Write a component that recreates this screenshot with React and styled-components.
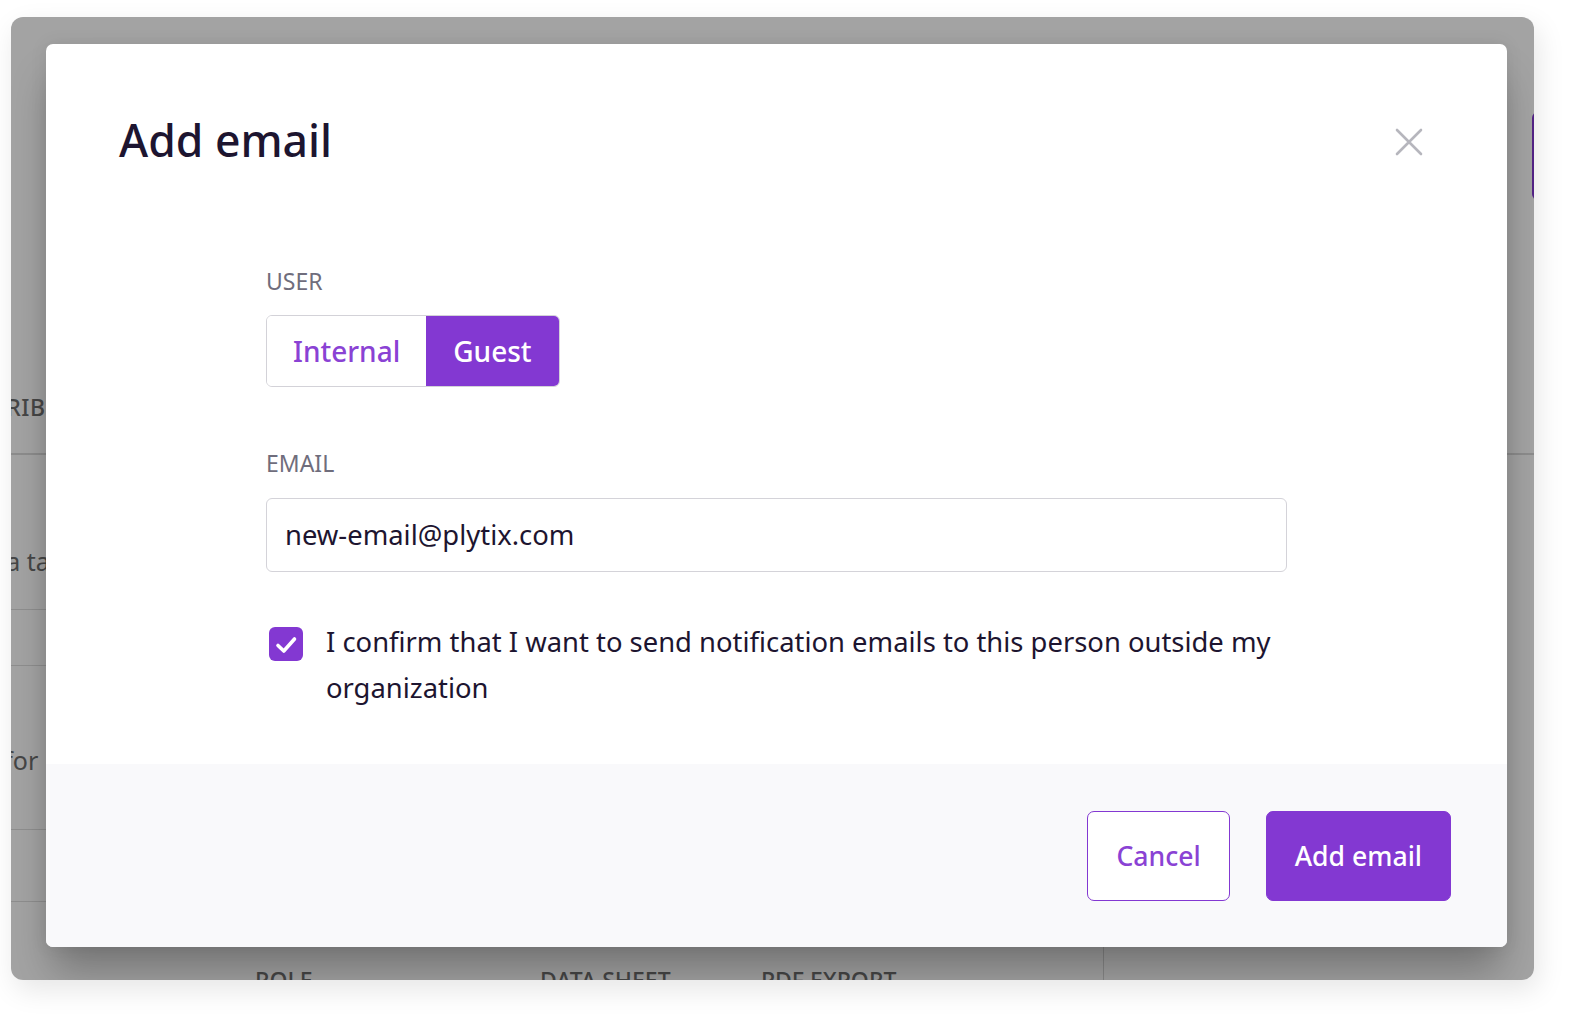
import React, { useState } from 'react';
import styled, { createGlobalStyle } from 'styled-components';

const GlobalStyle = createGlobalStyle`
  * { box-sizing: border-box; }
  body {
    margin: 0;
    background: #fff;
    font-family: "Noto Sans", "Open Sans", sans-serif;
  }
`;

function CloseIcon() {
  return (
    <svg width="28" height="28" viewBox="0 0 28 28" fill="none">
      <path d="M2 2L26 26M26 2L2 26" stroke="#b6b6bd" strokeWidth="2.6" strokeLinecap="round" />
    </svg>
  );
}

function CheckIcon() {
  return (
    <svg width="34" height="34" viewBox="0 0 34 34" fill="none">
      <path d="M9 18.5L14.8 24L25.5 12" stroke="#fff" strokeWidth="3.6" strokeLinecap="round" strokeLinejoin="round" />
    </svg>
  );
}

// the page that sits behind the dimmed overlay, only its edges show
function BackPage() {
  return (
    <StBackPage>
      <StPageHead>
        <StTabText>ATTRIBUTES</StTabText>
        <StEdgeButton />
      </StPageHead>
      <StLeftList>
        <StListRow $top={88} $bottom={30}>
          <StRowText $shift={-58}>Add a tag to this user</StRowText>
        </StListRow>
        <StListRow $top={55} $bottom={0} />
        <StListRow $top={76} $bottom={51}>
          <StRowText $shift={-73}>Used for notifications</StRowText>
        </StListRow>
        <StListRow $top={71} $bottom={0} />
      </StLeftList>
      <StTableHead>
        <StHeadCols>
          <StHeadCell>Role</StHeadCell>
          <StHeadCell>Data sheet</StHeadCell>
          <StHeadCell>PDF export</StHeadCell>
        </StHeadCols>
        <StHeadRest />
      </StTableHead>
    </StBackPage>
  );
}

function App() {
  const [userType, setUserType] = useState('guest');
  const [email, setEmail] = useState('new-email@plytix.com');
  const [confirmed, setConfirmed] = useState(true);

  return (
    <>
      <GlobalStyle />
      <StStage>
        <StWindow>
          <BackPage />
          <StOverlay>
            <StModal>
              <StHeader>
                <StTitle>Add email</StTitle>
                <StCloseButton aria-label="Close">
                  <CloseIcon />
                </StCloseButton>
              </StHeader>

              <StForm>
                <StFieldLabel>User</StFieldLabel>
                <StToggle>
                  <StToggleOption
                    $active={userType === 'internal'}
                    onClick={() => setUserType('internal')}
                  >
                    Internal
                  </StToggleOption>
                  <StToggleOption
                    $active={userType === 'guest'}
                    onClick={() => setUserType('guest')}
                  >
                    Guest
                  </StToggleOption>
                </StToggle>

                <StFieldLabel>Email</StFieldLabel>
                <StInput value={email} onChange={(e) => setEmail(e.target.value)} />

                <StCheckRow onClick={() => setConfirmed(!confirmed)}>
                  <StCheckbox $checked={confirmed}>{confirmed && <CheckIcon />}</StCheckbox>
                  <StCheckText>
                    I confirm that I want to send notification emails to this person outside my organization
                  </StCheckText>
                </StCheckRow>
              </StForm>

              <StFooter>
                <StButton>Cancel</StButton>
                <StButton $primary>Add email</StButton>
              </StFooter>
            </StModal>
          </StOverlay>
        </StWindow>
      </StStage>
    </>
  );
}

export default App;

const purple = '#8338d2';
const ink = '#1d1530';

const StStage = styled.div`
  height: 1024px;
  padding: 17px 0 0 11px;
  overflow: hidden;
`;

const StWindow = styled.div`
  position: relative;
  width: 1523px;
  height: 963px;
  border-radius: 12px;
  overflow: hidden;
  box-shadow: 4px 10px 28px rgba(0, 0, 0, 0.1);
`;

const StBackPage = styled.div`
  display: flex;
  flex-direction: column;
  width: 100%;
  height: 100%;
  background: #fff;
  color: #6e6e6e;
`;

const StPageHead = styled.div`
  display: flex;
  flex-shrink: 0;
  justify-content: space-between;
  align-items: flex-start;
  height: 438px;
  border-bottom: 2px solid #dcdcdc;
`;

const StTabText = styled.span`
  margin: 373px 0 0 -46px;
  font-size: 23px;
  line-height: 34.5px;
  font-weight: 500;
  letter-spacing: 0.5px;
`;

const StEdgeButton = styled.div`
  width: 40px;
  height: 88px;
  margin: 95px -38px 0 0;
  border-radius: 6px;
  background: ${purple};
`;

const StLeftList = styled.div`
  display: flex;
  flex-direction: column;
  flex-shrink: 0;
  width: 1060px;
`;

const StListRow = styled.div`
  flex-shrink: 0;
  padding: ${(p) => p.$top}px 0 ${(p) => p.$bottom}px;
  border-bottom: 1px solid #dedede;
`;

const StRowText = styled.p`
  margin: 0 0 0 ${(p) => p.$shift}px;
  font-size: 25px;
  line-height: 36px;
  white-space: nowrap;
`;

const StTableHead = styled.div`
  display: flex;
  flex-shrink: 0;
  height: 200px;
`;

const StHeadCols = styled.div`
  display: grid;
  grid-template-columns: 285px 221px auto;
  align-content: start;
  width: 1092px;
  padding: 61px 0 0 244px;
`;

const StHeadCell = styled.span`
  font-size: 23px;
  line-height: 34.5px;
  font-weight: 500;
  text-transform: uppercase;
`;

const StHeadRest = styled.div`
  flex: 1;
  border-left: 1px solid #d6d6d6;
`;

const StOverlay = styled.div`
  position: absolute;
  inset: 0;
  display: flex;
  align-items: flex-start;
  padding: 27px 0 0 35px;
  background: rgba(0, 0, 0, 0.36);
`;

const StModal = styled.div`
  display: flex;
  flex-direction: column;
  width: 1461px;
  height: 903px;
  border-radius: 7px;
  overflow: hidden;
  background: #fff;
  box-shadow: 0 30px 40px -6px rgba(0, 0, 0, 0.28), 0 0 18px rgba(0, 0, 0, 0.08);
`;

const StHeader = styled.div`
  display: flex;
  justify-content: space-between;
  align-items: center;
  padding: 69px 84px 0 73px;
`;

const StTitle = styled.h1`
  margin: 0;
  font-size: 44.5px;
  line-height: 54.6px;
  font-weight: 500;
  color: ${ink};
`;

const StCloseButton = styled.button`
  display: flex;
  margin-top: 3px;
  padding: 0;
  border: none;
  background: none;
  cursor: pointer;
`;

const StForm = styled.div`
  display: flex;
  flex-direction: column;
  padding: 96px 220px 0;
`;

const StFieldLabel = styled.label`
  margin-bottom: 17px;
  font-size: 23px;
  line-height: 34.5px;
  color: #6f6d7c;
  text-transform: uppercase;
`;

const StToggle = styled.div`
  display: flex;
  align-self: flex-start;
  height: 72px;
  margin-bottom: 59px;
  border: 1.5px solid #d3d2d8;
  border-radius: 6px;
  overflow: hidden;
`;

const StToggleOption = styled.button`
  padding: 0 ${(p) => (p.$active ? 27 : 26)}px;
  border: none;
  font-family: inherit;
  font-size: 28px;
  font-weight: 500;
  color: ${(p) => (p.$active ? '#fff' : '#8a42d4')};
  background: ${(p) => (p.$active ? purple : '#fff')};
  cursor: pointer;
`;

const StInput = styled.input`
  height: 74px;
  margin-bottom: 47.5px;
  padding: 0 18px;
  border: 1.5px solid #d4d3d9;
  border-radius: 6px;
  font-family: inherit;
  font-size: 27.4px;
  color: ${ink};
  outline: none;
`;

const StCheckRow = styled.div`
  display: flex;
  align-items: flex-start;
  gap: 23px;
  padding-left: 3px;
  cursor: pointer;
`;

const StCheckbox = styled.span`
  display: flex;
  flex-shrink: 0;
  width: 34px;
  height: 34px;
  margin-top: 8px;
  border-radius: 6px;
  border: ${(p) => (p.$checked ? 'none' : '1.5px solid #c9c8cf')};
  background: ${(p) => (p.$checked ? purple : '#fff')};
`;

const StCheckText = styled.p`
  margin: 0;
  font-size: 27.4px;
  line-height: 46px;
  color: ${ink};
`;

const StFooter = styled.div`
  display: flex;
  justify-content: flex-end;
  gap: 36px;
  margin-top: auto;
  padding: 47px 56px 46px;
  background: #f9f9fb;
`;

const StButton = styled.button`
  height: 90px;
  padding: 0 28px;
  border-radius: 7px;
  border: 1.5px solid ${purple};
  font-family: inherit;
  font-size: 26.6px;
  font-weight: 500;
  color: ${(p) => (p.$primary ? '#fff' : '#8a42d4')};
  background: ${(p) => (p.$primary ? purple : '#fff')};
  cursor: pointer;
`;
